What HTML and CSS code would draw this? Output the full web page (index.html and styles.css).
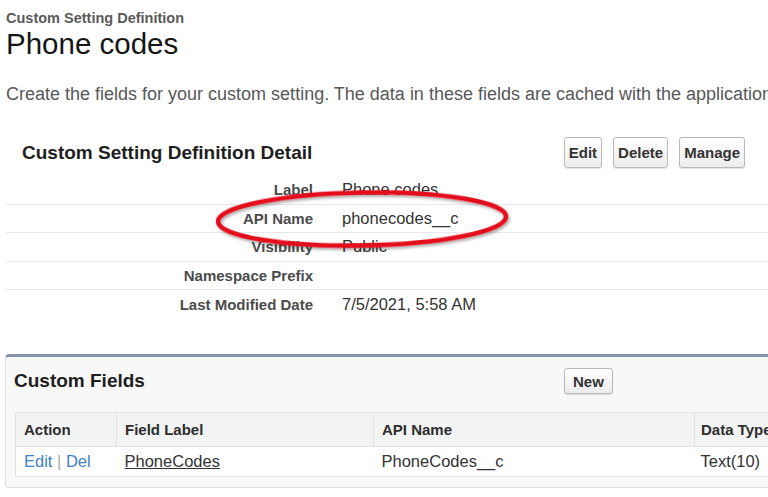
FILE: index.html
```html
<!DOCTYPE html>
<html>
<head>
<meta charset="utf-8">
<link rel="stylesheet" href="styles.css">
</head>
<body>
<div class="page">
  <div class="crumb">Custom Setting Definition</div>
  <h1 class="title">Phone codes</h1>
  <p class="desc">Create the fields for your custom setting. The data in these fields are cached with the application</p>

  <section class="detail">
    <div class="detail-head">
      <h2 class="section-title">Custom Setting Definition Detail</h2>
      <div class="btns">
        <button class="btn">Edit</button>
        <button class="btn">Delete</button>
        <button class="btn">Manage</button>
      </div>
    </div>
    <div class="rows">
      <div class="row"><span class="lbl">Label</span><span class="val">Phone codes</span></div>
      <div class="row"><span class="lbl">API Name</span><span class="val">phonecodes__c</span></div>
      <div class="row"><span class="lbl">Visibility</span><span class="val">Public</span></div>
      <div class="row"><span class="lbl">Namespace Prefix</span><span class="val"></span></div>
      <div class="row last"><span class="lbl">Last Modified Date</span><span class="val">7/5/2021, 5:58 AM</span></div>
    </div>
    <svg class="annot" width="320" height="70" viewBox="0 0 320 70">
      <defs>
        <filter id="sh" x="-10%" y="-30%" width="120%" height="160%">
          <feDropShadow dx="1.5" dy="2" stdDeviation="1.5" flood-color="#000" flood-opacity="0.35"/>
        </filter>
      </defs>
      <ellipse cx="161" cy="35" rx="144" ry="26.5" fill="none" stroke="#e3111b" stroke-width="4.5" transform="rotate(-1 161 35)" filter="url(#sh)"/>
    </svg>
  </section>

  <section class="fields">
    <div class="fields-head">
      <h2 class="section-title small">Custom Fields</h2>
      <button class="btn new">New</button>
    </div>
    <table class="tbl">
      <colgroup>
        <col class="w1"><col class="w2"><col class="w3"><col class="w4">
      </colgroup>
      <thead>
        <tr><th>Action</th><th>Field Label</th><th>API Name</th><th class="c4">Data Type</th></tr>
      </thead>
      <tbody>
        <tr>
          <td><a class="act">Edit</a> <span class="sep">|</span> <a class="act">Del</a></td>
          <td><a class="flink">PhoneCodes</a></td>
          <td>PhoneCodes__c</td>
          <td class="c4">Text(10)</td>
        </tr>
      </tbody>
    </table>
  </section>
</div>
</body>
</html>
```

FILE: styles.css
```css
html, body {
  margin: 0;
  padding: 0;
  background: #ffffff;
  overflow: hidden;
}
body {
  font-family: "Liberation Sans", Arial, sans-serif;
  color: #333;
}
.page {
  width: 768px;
  height: 497px;
  overflow: hidden;
  padding-left: 6px;
  box-sizing: border-box;
}
.crumb {
  margin-top: 10px;
  font-size: 14.5px;
  line-height: 16px;
  font-weight: bold;
  color: #5a5a5a;
}
.title {
  margin: 1px 0 0 0;
  font-size: 29.5px;
  line-height: 34px;
  font-weight: normal;
  color: #161616;
}
.desc {
  margin: 22px 0 0 0;
  font-size: 18px;
  line-height: 22px;
  color: #585858;
  white-space: nowrap;
}
.detail {
  position: relative;
  margin-top: 32px;
}
.detail-head {
  display: flex;
  align-items: center;
  justify-content: space-between;
  padding: 0 23px 0 16px;
  height: 31px;
}
.section-title {
  margin: 0;
  font-size: 19px;
  font-weight: bold;
  color: #1e1e1e;
}
.btns {
  display: flex;
  gap: 11px;
}
.btn {
  font-family: "Liberation Sans", Arial, sans-serif;
  font-size: 15px;
  font-weight: bold;
  color: #333;
  height: 31px;
  padding: 0 4px;
  background: linear-gradient(#ffffff, #ececec);
  border: 1px solid #b9b9b9;
  border-radius: 3px;
  box-shadow: 0 1px 1px rgba(0,0,0,0.12);
}
.rows {
  margin-top: 8px;
}
.row {
  display: flex;
  align-items: center;
  height: 28.5px;
  box-sizing: border-box;
  border-bottom: 1px solid #e8e8e8;
}
.row.last {
  border-bottom: none;
}
.lbl {
  width: 307px;
  flex: none;
  text-align: right;
  font-size: 15px;
  font-weight: bold;
  color: #4b4b4b;
}
.val {
  margin-left: 29px;
  font-size: 16.5px;
  color: #333;
}
.annot {
  position: absolute;
  left: 195px;
  top: 47px;
  overflow: visible;
}
.fields {
  margin-top: 35.5px;
  margin-left: -1px;
  width: 820px;
  background: #f8f8f8;
  border: 1px solid #dfdfdf;
  border-top: 3px solid #8695ad;
  border-radius: 4px;
  padding: 0 0 10px 9px;
  box-sizing: border-box;
}
.fields-head {
  display: flex;
  align-items: center;
  padding: 11px 0 18px 0;
}
.section-title.small {
  width: 550px;
  margin-left: -1px;
}
.btn.new {
  height: 26px;
  padding: 0 8px;
}
.tbl {
  table-layout: fixed;
  width: 799px;
  border-collapse: collapse;
  background: #fff;
  border: 1px solid #e3e3e3;
  font-size: 16.5px;
}
.w1 { width: 101px; }
.w2 { width: 257px; }
.w3 { width: 321px; }
.w4 { width: 120px; }
.tbl th {
  background: #f2f3f3;
  height: 34px;
  box-sizing: border-box;
  text-align: left;
  font-size: 15px;
  font-weight: bold;
  color: #2e2e2e;
  padding: 0 8px;
  border-right: 1px solid #e2e2e2;
  border-bottom: 1px solid #e2e2e2;
  white-space: nowrap;
}
.tbl td {
  height: 30px;
  box-sizing: border-box;
  padding: 0 8px;
  color: #333;
  border-bottom: 1px solid #e6e6e6;
  white-space: nowrap;
}
.tbl .c4 { padding-left: 6px; }
.act {
  color: #3f82c4;
}
.sep {
  color: #aaa;
}
.flink {
  color: #333;
  text-decoration: underline;
}
```
